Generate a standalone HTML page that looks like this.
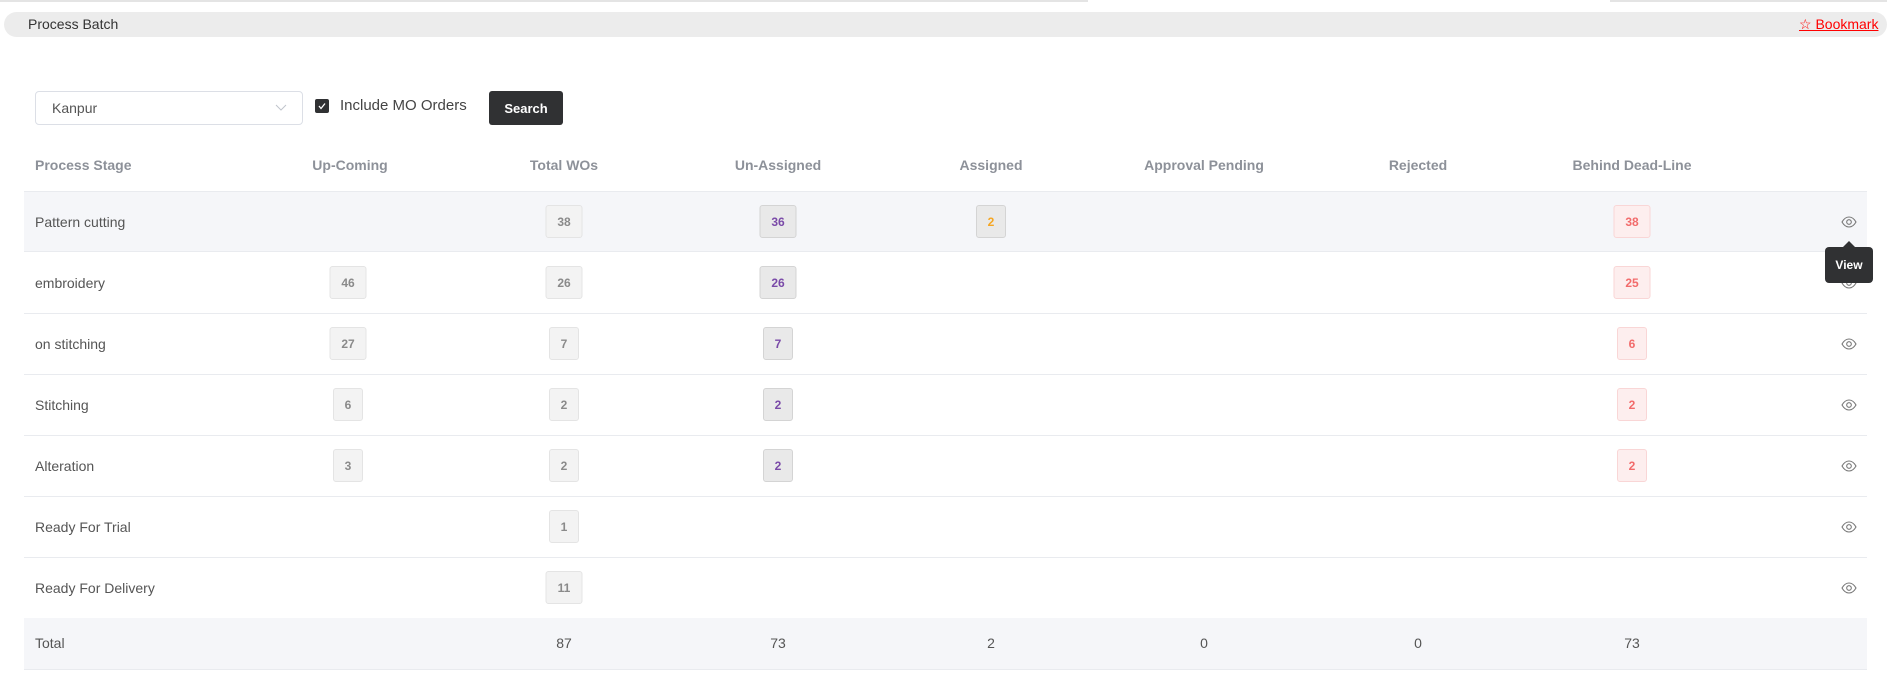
<!DOCTYPE html>
<html><head><meta charset="utf-8"><style>
*{box-sizing:border-box;margin:0;padding:0}
body{width:1897px;height:678px;background:#fff;font-family:"Liberation Sans",sans-serif;position:relative;overflow:hidden;color:#555}
.abs{position:absolute}
.hdr{top:12px;left:4px;width:1883px;height:25px;background:#ececec;border-radius:13px}
.th{position:absolute;top:157px;font-size:14px;font-weight:bold;color:#8d9199;white-space:nowrap;transform:translateX(-50%)}
.row{position:absolute;left:24px;width:1843px;height:61px;border-bottom:1px solid #e9ebef}
.lbl{position:absolute;left:35px;font-size:14px;color:#555}
.b{position:absolute;width:37px;height:33px;border-radius:3px;font-size:12px;font-weight:600;display:flex;align-items:center;justify-content:center;transform:translateX(-50%)}
.g{background:#f3f3f3;border:1px solid #e4e4e4;color:#8a8a8a}
.p{background:#e9e9e9;border:1px solid #d4d4d4;color:#7a4aa8}
.o{background:#e9e9e9;border:1px solid #d4d4d4;color:#f5a623}
.r{background:#fdeeee;border:1px solid #f9d6d6;color:#f26b6b}
.t{position:absolute;font-size:14px;color:#555;transform:translateX(-50%)}
.eye{position:absolute;left:1841px}
</style></head><body>
<div class="abs" style="top:0;left:0;width:1088px;height:2px;background:#e4e4e4"></div>
<div class="abs" style="top:0;left:1610px;width:277px;height:2px;background:#e4e4e4"></div>
<div class="abs hdr"></div>
<div class="abs" style="left:28px;top:16px;font-size:14px;color:#333">Process Batch</div>
<div class="abs" style="left:1799px;top:16px;font-size:14px;color:#f00;text-decoration:underline">☆ Bookmark</div>

<div class="abs" style="left:35px;top:91px;width:268px;height:34px;border:1px solid #dcdfe6;border-radius:4px"></div>
<div class="abs" style="left:52px;top:100px;font-size:14px;color:#555">Kanpur</div>
<svg class="abs" style="left:275px;top:104px" width="12" height="8" viewBox="0 0 12 8"><path d="M1 1l5 5 5-5" fill="none" stroke="#c0c4cc" stroke-width="1"/></svg>
<div class="abs" style="left:315px;top:99px;width:14px;height:14px;background:#303133;border-radius:2px"></div>
<svg class="abs" style="left:315px;top:99px" width="14" height="14"><path d="M4 7l2 2.5 4-5" fill="none" stroke="#fff" stroke-width="1.3"/></svg>
<div class="abs" style="left:340px;top:97px;font-size:15px;color:#444">Include MO Orders</div>
<div class="abs" style="left:489px;top:91px;width:74px;height:34px;background:#303133;border-radius:3px;color:#fff;font-size:13px;font-weight:bold;display:flex;align-items:center;justify-content:center">Search</div>

<div class="th" style="left:35px;transform:none">Process Stage</div>
<div class="th" style="left:350px">Up-Coming</div>
<div class="th" style="left:564px">Total WOs</div>
<div class="th" style="left:778px">Un-Assigned</div>
<div class="th" style="left:991px">Assigned</div>
<div class="th" style="left:1204px">Approval Pending</div>
<div class="th" style="left:1418px">Rejected</div>
<div class="th" style="left:1632px">Behind Dead-Line</div>

<div class="row" style="top:191px;background:#f5f6f9;border-top:1px solid #e9ebef"></div>
<div class="row" style="top:253px"></div>
<div class="row" style="top:314px"></div>
<div class="row" style="top:375px"></div>
<div class="row" style="top:436px"></div>
<div class="row" style="top:497px"></div>
<div class="row" style="top:558px"></div>
<div class="row" style="top:618px;height:52px;background:#f5f6f9"></div>

<div class="lbl" style="top:214px">Pattern cutting</div>
<div class="lbl" style="top:275px">embroidery</div>
<div class="lbl" style="top:336px">on stitching</div>
<div class="lbl" style="top:397px">Stitching</div>
<div class="lbl" style="top:458px">Alteration</div>
<div class="lbl" style="top:519px">Ready For Trial</div>
<div class="lbl" style="top:580px">Ready For Delivery</div>
<div class="lbl" style="top:635px">Total</div>

<div class="b g" style="left:564px;top:205px">38</div>
<div class="b p" style="left:778px;top:205px">36</div>
<div class="b o" style="left:991px;top:205px;width:30px">2</div>
<div class="b r" style="left:1632px;top:205px">38</div>

<div class="b g" style="left:348px;top:266px">46</div>
<div class="b g" style="left:564px;top:266px">26</div>
<div class="b p" style="left:778px;top:266px">26</div>
<div class="b r" style="left:1632px;top:266px">25</div>

<div class="b g" style="left:348px;top:327px">27</div>
<div class="b g" style="left:564px;top:327px;width:30px">7</div>
<div class="b p" style="left:778px;top:327px;width:30px">7</div>
<div class="b r" style="left:1632px;top:327px;width:30px">6</div>

<div class="b g" style="left:348px;top:388px;width:30px">6</div>
<div class="b g" style="left:564px;top:388px;width:30px">2</div>
<div class="b p" style="left:778px;top:388px;width:30px">2</div>
<div class="b r" style="left:1632px;top:388px;width:30px">2</div>

<div class="b g" style="left:348px;top:449px;width:30px">3</div>
<div class="b g" style="left:564px;top:449px;width:30px">2</div>
<div class="b p" style="left:778px;top:449px;width:30px">2</div>
<div class="b r" style="left:1632px;top:449px;width:30px">2</div>

<div class="b g" style="left:564px;top:510px;width:30px">1</div>
<div class="b g" style="left:564px;top:571px">11</div>

<div class="t" style="left:564px;top:635px">87</div>
<div class="t" style="left:778px;top:635px">73</div>
<div class="t" style="left:991px;top:635px">2</div>
<div class="t" style="left:1204px;top:635px">0</div>
<div class="t" style="left:1418px;top:635px">0</div>
<div class="t" style="left:1632px;top:635px">73</div>

<svg class="eye" style="top:216px" width="16" height="12" viewBox="0 0 16 12"><path d="M1 6C3 2.5 5.5 1 8 1s5 1.5 7 5c-2 3.5-4.5 5-7 5S3 9.5 1 6z" fill="none" stroke="#777" stroke-width="1.1"/><circle cx="8" cy="6" r="2.3" fill="none" stroke="#777" stroke-width="1.1"/></svg>
<svg class="eye" style="top:277px" width="16" height="12" viewBox="0 0 16 12"><path d="M1 6C3 2.5 5.5 1 8 1s5 1.5 7 5c-2 3.5-4.5 5-7 5S3 9.5 1 6z" fill="none" stroke="#777" stroke-width="1.1"/><circle cx="8" cy="6" r="2.3" fill="none" stroke="#777" stroke-width="1.1"/></svg>
<svg class="eye" style="top:338px" width="16" height="12" viewBox="0 0 16 12"><path d="M1 6C3 2.5 5.5 1 8 1s5 1.5 7 5c-2 3.5-4.5 5-7 5S3 9.5 1 6z" fill="none" stroke="#777" stroke-width="1.1"/><circle cx="8" cy="6" r="2.3" fill="none" stroke="#777" stroke-width="1.1"/></svg>
<svg class="eye" style="top:399px" width="16" height="12" viewBox="0 0 16 12"><path d="M1 6C3 2.5 5.5 1 8 1s5 1.5 7 5c-2 3.5-4.5 5-7 5S3 9.5 1 6z" fill="none" stroke="#777" stroke-width="1.1"/><circle cx="8" cy="6" r="2.3" fill="none" stroke="#777" stroke-width="1.1"/></svg>
<svg class="eye" style="top:460px" width="16" height="12" viewBox="0 0 16 12"><path d="M1 6C3 2.5 5.5 1 8 1s5 1.5 7 5c-2 3.5-4.5 5-7 5S3 9.5 1 6z" fill="none" stroke="#777" stroke-width="1.1"/><circle cx="8" cy="6" r="2.3" fill="none" stroke="#777" stroke-width="1.1"/></svg>
<svg class="eye" style="top:521px" width="16" height="12" viewBox="0 0 16 12"><path d="M1 6C3 2.5 5.5 1 8 1s5 1.5 7 5c-2 3.5-4.5 5-7 5S3 9.5 1 6z" fill="none" stroke="#777" stroke-width="1.1"/><circle cx="8" cy="6" r="2.3" fill="none" stroke="#777" stroke-width="1.1"/></svg>
<svg class="eye" style="top:582px" width="16" height="12" viewBox="0 0 16 12"><path d="M1 6C3 2.5 5.5 1 8 1s5 1.5 7 5c-2 3.5-4.5 5-7 5S3 9.5 1 6z" fill="none" stroke="#777" stroke-width="1.1"/><circle cx="8" cy="6" r="2.3" fill="none" stroke="#777" stroke-width="1.1"/></svg>

<div class="abs" style="left:1843px;top:241px;width:0;height:0;border-left:6px solid transparent;border-right:6px solid transparent;border-bottom:6px solid #303133"></div>
<div class="abs" style="left:1825px;top:247px;width:48px;height:36px;background:#303133;border-radius:4px;color:#fff;font-size:12px;font-weight:bold;display:flex;align-items:center;justify-content:center">View</div>
</body></html>
